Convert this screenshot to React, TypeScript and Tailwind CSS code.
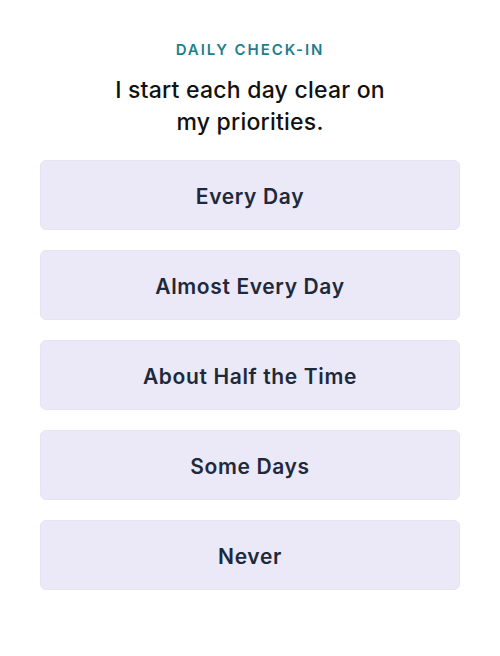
import React from "react";

const options = ["Every Day", "Almost Every Day", "About Half the Time", "Some Days", "Never"];

export default function App() {
  return (
    <div className="min-h-[656px] w-[500px] bg-white font-['Inter',sans-serif]">
      <div className="px-10 pt-[40px]">
        <div className="text-center text-[15px] leading-5 font-semibold tracking-[0.13em] text-[#1d7f8c]">
          DAILY CHECK-IN
        </div>
        <h1 className="mt-[14px] text-center text-[23px] leading-8 font-medium tracking-[0.01em] text-[#111111]">
          I start each day clear on
          <br />
          my priorities.
        </h1>
        <div className="mt-[22px] flex flex-col gap-5">
          {options.map((o) => (
            <button
              key={o}
              className="h-[70px] w-full rounded-md border border-[#e6e4f3] bg-[#ebe9f7] pt-1 text-[21px] font-semibold tracking-[0.03em] text-[#1e293b]"
            >
              {o}
            </button>
          ))}
        </div>
      </div>
    </div>
  );
}
